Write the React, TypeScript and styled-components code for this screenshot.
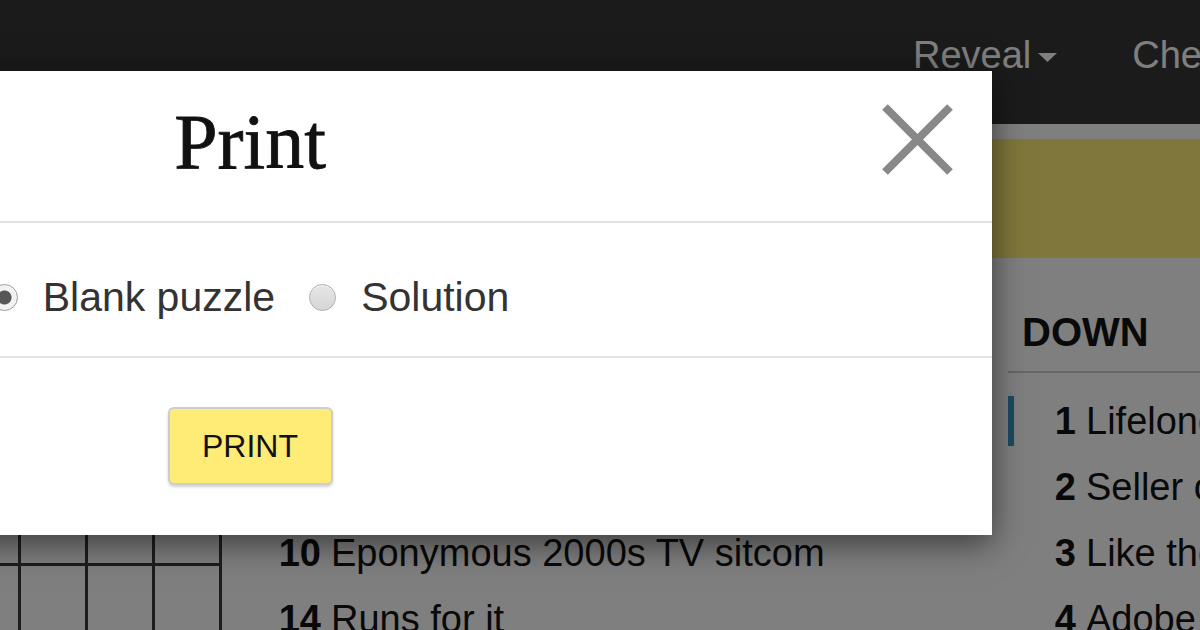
import React from "react";
import styled, { createGlobalStyle } from "styled-components";

const GlobalStyle = createGlobalStyle`
  * { box-sizing: border-box; }
  html, body {
    margin: 0;
    padding: 0;
    width: 1200px;
    height: 630px;
    overflow: hidden;
  }
  body {
    font-family: "Liberation Sans", Arial, sans-serif;
    background: #ffffff;
  }
`;

const Page = styled.div`
  position: relative;
  width: 1200px;
  height: 630px;
  overflow: hidden;
  background: #ffffff;
`;

const TopBar = styled.header`
  height: 124px;
  background: #363636;
  display: flex;
  align-items: flex-start;
  padding: 36px 0 0 913px;
  white-space: nowrap;
`;

const NavItem = styled.div`
  display: flex;
  align-items: flex-start;
  gap: 7px;
  margin-right: 75px;
  font-size: 38px;
  line-height: 38px;
  color: #ffffff;
`;

const Caret = styled.svg`
  margin-top: 17px;
  flex: none;
`;

const Strip = styled.div`
  height: 15px;
  background: #ffffff;
`;

const ClueBar = styled.div`
  height: 119px;
  background: #feee76;
`;

const Main = styled.main`
  display: flex;
  align-items: flex-start;
  padding-top: 37px;
  white-space: nowrap;
`;

const Board = styled.div`
  flex: none;
  margin-left: -49px;
  display: grid;
  grid-template-columns: repeat(4, 64px);
  grid-auto-rows: 64px;
  gap: 3px;
  padding: 3px;
  background: #3a3a3a;
`;

const Cell = styled.div`
  background: #ffffff;
`;

const ClueColumn = styled.section<{ $width?: number; $ml: number }>`
  flex: ${(p) => (p.$width ? "none" : "1")};
  width: ${(p) => (p.$width ? `${p.$width}px` : "auto")};
  margin-left: ${(p) => p.$ml}px;
  padding-top: 17px;
`;

const ClueHeading = styled.h2`
  margin: 0;
  font-size: 40px;
  line-height: 40px;
  font-weight: 700;
  color: #121212;
  padding: 0 0 19px 14px;
  border-bottom: 2px solid #cccccc;
`;

const ClueList = styled.ol`
  list-style: none;
  margin: 15px 0 0;
  padding: 0;
`;

const ClueItem = styled.li`
  padding: 8px 0;
`;

const ClueBody = styled.div<{ $active?: boolean }>`
  display: flex;
  height: 50px;
  line-height: 50px;
  font-size: 38px;
  color: #121212;
  border-left: 6px solid ${(p) => (p.$active ? "#3896c6" : "transparent")};
`;

const ClueNum = styled.span`
  flex: none;
  width: 62px;
  text-align: right;
  font-weight: 700;
`;

const ClueText = styled.span`
  margin-left: 10px;
`;

const Overlay = styled.div`
  position: absolute;
  inset: 0;
  background: rgba(0, 0, 0, 0.5);
`;

const Modal = styled.div`
  position: absolute;
  left: -492px;
  top: 71px;
  width: 1484px;
  background: #ffffff;
  box-shadow: 0 8px 32px rgba(0, 0, 0, 0.55);
`;

const ModalHeader = styled.div`
  position: relative;
  display: flex;
  justify-content: center;
  padding: 32px 0 40px;
  border-bottom: 2px solid #e3e3e3;
`;

const Title = styled.h1`
  margin: 0;
  font-family: "Liberation Serif", "Times New Roman", serif;
  font-weight: 400;
  font-size: 78px;
  line-height: 78px;
  color: #111111;
  -webkit-text-stroke: 0.8px #111111;
`;

const CloseButton = styled.button`
  position: absolute;
  top: 33px;
  right: 39px;
  width: 71px;
  height: 71px;
  padding: 0;
  border: 0;
  background: none;
  cursor: pointer;
`;

const OptionRow = styled.div`
  display: flex;
  justify-content: center;
  align-items: center;
  gap: 34px;
  padding: 51px 0 36px;
  border-bottom: 2px solid #e3e3e3;
`;

const Option = styled.label`
  display: flex;
  align-items: center;
  gap: 25px;
  font-size: 41px;
  line-height: 46px;
  color: #333333;
`;

const Radio = styled.span<{ $checked?: boolean }>`
  flex: none;
  width: 27px;
  height: 27px;
  border-radius: 50%;
  border: 1.5px solid ${(p) => (p.$checked ? "#9c9c9c" : "#adadad")};
  background: ${(p) =>
    p.$checked
      ? "radial-gradient(circle, #565656 0 6.5px, #f1f1f1 7.5px)"
      : "linear-gradient(#e6e6e6, #d6d6d6)"};
  box-shadow: inset 0 1px 1px rgba(255, 255, 255, 0.7);
`;

const ActionRow = styled.div`
  display: flex;
  justify-content: center;
  padding: 49px 0 50px;
`;

const PrintButton = styled.button`
  width: 165px;
  height: 78px;
  border-radius: 6px;
  border: 2px solid #cdcdcd;
  background: #ffec76;
  box-shadow: 0 2px 3px rgba(0, 0, 0, 0.18);
  font-family: "Liberation Sans", Arial, sans-serif;
  font-size: 32px;
  color: #111111;
  padding: 0;
  cursor: pointer;
`;

const acrossClues = [
  { n: 1, t: "Fizzy drink" },
  { n: 5, t: "Bit of gossip" },
  { n: 10, t: "Eponymous 2000s TV sitcom" },
  { n: 14, t: "Runs for it" },
];

const downClues = [
  { n: 1, t: "Lifelong pal", active: true },
  { n: 2, t: "Seller of goods" },
  { n: 3, t: "Like the desert" },
  { n: 4, t: "Adobe file format" },
];

const CaretIcon = () => (
  <Caret width="19" height="9" viewBox="0 0 19 9">
    <polygon points="0,0 19,0 9.5,9" fill="#ffffff" />
  </Caret>
);

export default function App() {
  return (
    <>
      <GlobalStyle />
      <Page>
        <TopBar>
          <NavItem>
            Reveal
            <CaretIcon />
          </NavItem>
          <NavItem>
            Check
            <CaretIcon />
          </NavItem>
        </TopBar>
        <Strip />
        <ClueBar />
        <Main>
          <Board>
            {Array.from({ length: 20 }).map((_, i) => (
              <Cell key={i} />
            ))}
          </Board>
          <ClueColumn $width={725} $ml={31}>
            <ClueHeading>ACROSS</ClueHeading>
            <ClueList>
              {acrossClues.map((c) => (
                <ClueItem key={c.n}>
                  <ClueBody>
                    <ClueNum>{c.n}</ClueNum>
                    <ClueText>{c.t}</ClueText>
                  </ClueBody>
                </ClueItem>
              ))}
            </ClueList>
          </ClueColumn>
          <ClueColumn $ml={30}>
            <ClueHeading>DOWN</ClueHeading>
            <ClueList>
              {downClues.map((c) => (
                <ClueItem key={c.n}>
                  <ClueBody $active={c.active}>
                    <ClueNum>{c.n}</ClueNum>
                    <ClueText>{c.t}</ClueText>
                  </ClueBody>
                </ClueItem>
              ))}
            </ClueList>
          </ClueColumn>
        </Main>
        <Overlay />
        <Modal role="dialog" aria-label="Print">
          <ModalHeader>
            <Title>Print</Title>
            <CloseButton aria-label="Close">
              <svg width="71" height="71" viewBox="0 0 71 71">
                <path d="M3 3L68 68M68 3L3 68" stroke="#888888" strokeWidth="8" fill="none" />
              </svg>
            </CloseButton>
          </ModalHeader>
          <OptionRow>
            <Option>
              <Radio $checked />
              Blank puzzle
            </Option>
            <Option>
              <Radio />
              Solution
            </Option>
          </OptionRow>
          <ActionRow>
            <PrintButton>PRINT</PrintButton>
          </ActionRow>
        </Modal>
      </Page>
    </>
  );
}
